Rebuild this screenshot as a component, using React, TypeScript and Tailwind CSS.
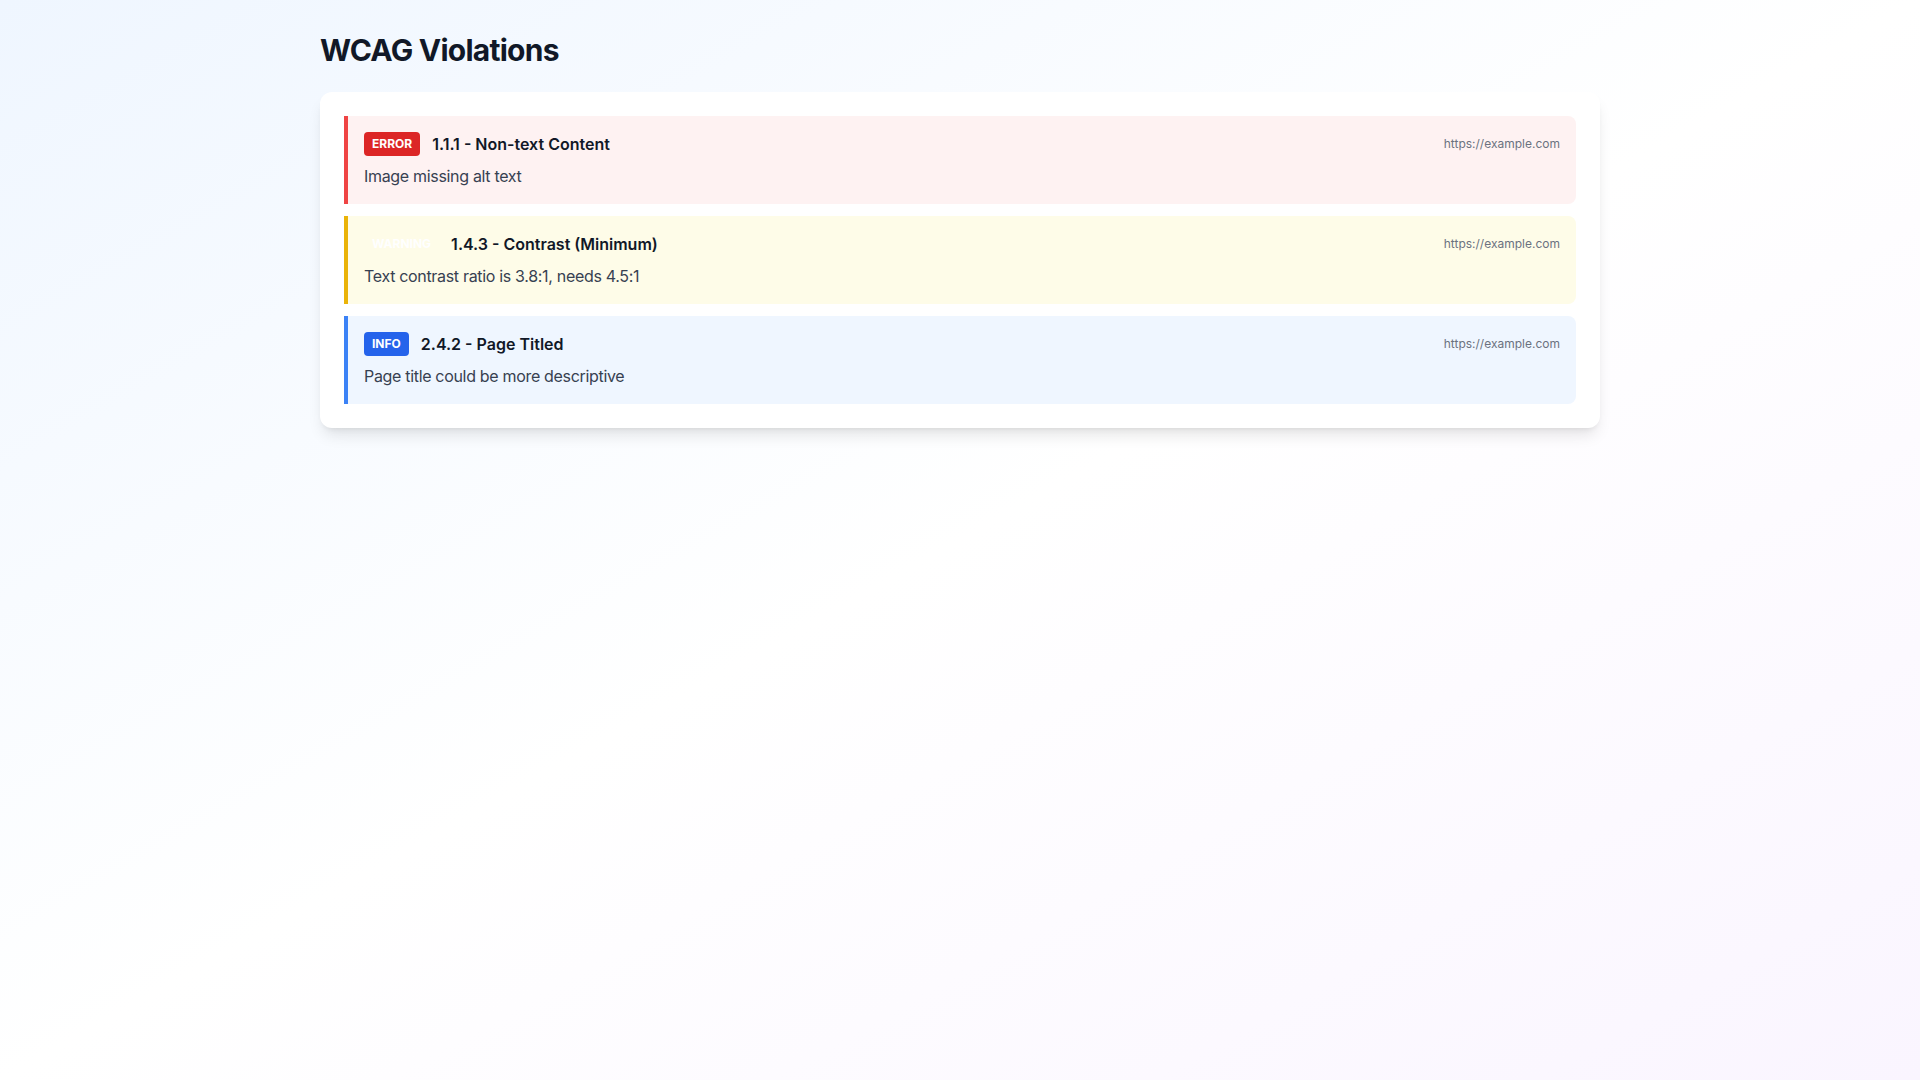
type Severity = 'error' | 'warning' | 'info'

interface Violation {
  id: string
  severity: Severity
  criterion: string
  message: string
  url: string
}

const violations: Violation[] = [
  { id: 'v1', severity: 'error', criterion: '1.1.1 - Non-text Content', message: 'Image missing alt text', url: 'https://example.com' },
  { id: 'v2', severity: 'warning', criterion: '1.4.3 - Contrast (Minimum)', message: 'Text contrast ratio is 3.8:1, needs 4.5:1', url: 'https://example.com' },
  { id: 'v3', severity: 'info', criterion: '2.4.2 - Page Titled', message: 'Page title could be more descriptive', url: 'https://example.com' },
]

const SEVERITY_STYLE = {
  error: { label: 'ERROR', row: 'bg-[#fef2f2] border-[#ef4444]', badge: 'bg-[#dc2626] text-white' },
  warning: { label: 'WARNING', row: 'bg-[#fefce8] border-[#eab308]', badge: 'bg-[#fefce8] text-white' },
  info: { label: 'INFO', row: 'bg-[#eff6ff] border-[#3b82f6]', badge: 'bg-[#2563eb] text-white' },
} as const

export default function App() {
  return (
    <div className="min-h-screen bg-gradient-to-br from-[#eff6ff] via-white to-[#faf5ff] font-['Inter',sans-serif]">
      <div className="max-w-7xl mx-auto py-8">
        <h1 className="text-3xl font-bold tracking-tight text-[#111827] mb-6">WCAG Violations</h1>
        <div className="bg-white rounded-xl shadow-lg p-6 flex flex-col gap-3">
          {violations.map(v => {
            const { label, row, badge } = SEVERITY_STYLE[v.severity]
            return (
              <div key={v.id} className={`border-l-4 rounded-r-lg p-4 ${row}`}>
                <div className="flex items-center justify-between">
                  <div className="flex items-center gap-3">
                    <span className={`px-2 py-1 rounded text-xs font-bold ${badge}`}>{label}</span>
                    <span className="text-base font-semibold text-[#111827]">{v.criterion}</span>
                  </div>
                  <span className="text-xs text-[#6b7280]">{v.url}</span>
                </div>
                <p className="mt-2 text-base tracking-[-0.02em] text-[#374151]">{v.message}</p>
              </div>
            )
          })}
        </div>
      </div>
    </div>
  )
}
